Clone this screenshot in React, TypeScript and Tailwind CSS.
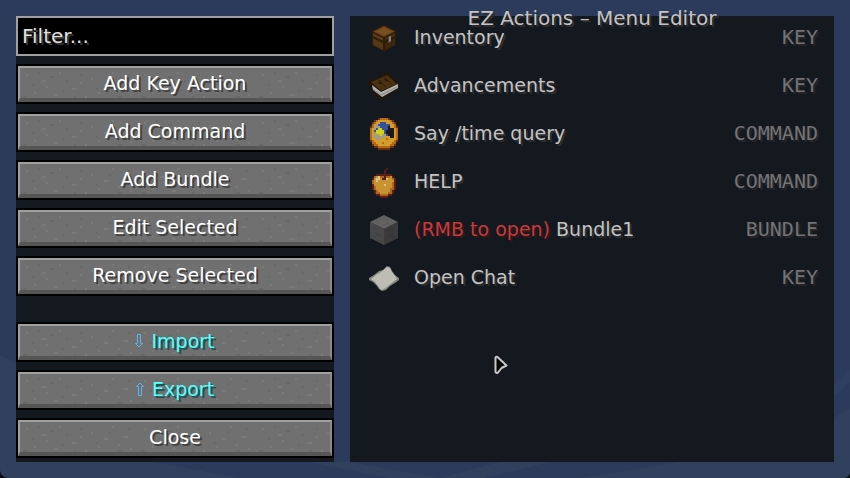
import clsx from "clsx";
import type { ReactNode } from "react";

type Entry = {
  name: string;
  hint?: string;
  type: string;
  icon: ReactNode;
};

const shadowLight = "[text-shadow:2px_2px_0_#2f2f30]";

function Sprite({ rows, colors }: { rows: string[]; colors: Record<string, string> }) {
  return (
    <svg
      viewBox={`0 0 ${rows[0].length} ${rows.length}`}
      className="size-8 shrink-0"
      shapeRendering="crispEdges"
      aria-hidden="true"
    >
      {rows.map((row, y) =>
        row
          .split("")
          .map((c, x) =>
            colors[c] ? <rect key={`${x}-${y}`} x={x} y={y} width="1" height="1" fill={colors[c]} /> : null
          )
      )}
    </svg>
  );
}

function ChestIcon() {
  return (
    <svg viewBox="0 0 32 32" className="size-8 shrink-0" aria-hidden="true">
      <path d="M16 3 28 9v14l-12 7L4 23V9z" fill="#2a1c0d" />
      <path d="M16 4 27 9.500 16 15 5 9.500z" fill="#6b4415" />
      <path d="m16 6 8 3.500-8 3.500-8-3.500z" fill="#7b5020" />
      <path d="m5 11 10 5v3L5 14z" fill="#5c3c14" />
      <path d="m5 16 10 5v7L5 23z" fill="#553712" />
      <path d="m27 11-10 5v3l10-5z" fill="#432c10" />
      <path d="m27 16-10 5v7l10-5z" fill="#3c270e" />
      <path d="m20 15 3-1v5l-3 2z" fill="#848484" />
      <path d="m20 15 1-.5v6l-1 .5z" fill="#454545" />
    </svg>
  );
}

function BookIcon() {
  return (
    <svg viewBox="0 0 32 32" className="size-8 shrink-0" aria-hidden="true">
      <path d="M19 3h3l9 12v3l-4 2v2l-11 6-3 2-3-2-8-8v-4l-2-2v-2z" fill="#21150b" />
      <path d="m19 5 10 9-16 7L3 12z" fill="#4a3110" />
      <path d="m10 9 8 8m-3-11 8 8" stroke="#3a250c" strokeWidth="1.500" />
      <path d="m11 12 2 2m4-5 2 2" stroke="#1c1208" strokeWidth="1.500" />
      <path d="M4 15 13 22 30 14V18L14 27 5 20z" fill="#b3b3b3" />
      <path d="m5 19 8 6 16-8" fill="none" stroke="#83837f" />
    </svg>
  );
}

function ClockIcon() {
  return (
    <Sprite
      rows={[
        ".....roooor.....",
        "...royyyyyyor...",
        "..royybbbyyyor..",
        "..oygbbbbbbyyo..",
        ".royggbbbbkyyor.",
        ".oygbLLbbbkkkyo.",
        ".oybLLLLbkkkkyo.",
        ".oygLLLLbkkkkyo.",
        ".oygglLggbkkkyo.",
        ".oygggggyyykkyo.",
        ".oyyggyyyoyyyyo.",
        ".royyyyyyyyyyor.",
        "..ooyyyoyyyyoo..",
        "..rooyyyyyyoor..",
        "...rroooooorr...",
        ".....rrrrrr.....",
      ]}
      colors={{
        o: "#b56a18",
        y: "#d59b2b",
        g: "#9c9c91",
        b: "#36519a",
        k: "#19191e",
        l: "#b7b521",
        L: "#d5d115",
        r: "#6b3010",
      }}
    />
  );
}

function AppleIcon() {
  return (
    <Sprite
      rows={[
        "................",
        ".........r......",
        "........r.......",
        "........r.......",
        "....rrrrrrrr....",
        "...oywoorooyr...",
        "..rywwyrrwyyor..",
        "..oywyyyyyyyyr..",
        "..oyyyyyyyyyor..",
        "..ryyyyywyyyor..",
        "..royyyyyyyyor..",
        "..royyyyyyyoor..",
        "...royyyyyyor...",
        "...rooyyyyoor...",
        "....rroooorr....",
        "......rrrr......",
      ]}
      colors={{ r: "#5c1d18", o: "#ac681f", y: "#c99332", w: "#dfc287" }}
    />
  );
}

function StoneIcon() {
  return (
    <svg viewBox="0 0 32 32" className="size-8 shrink-0" aria-hidden="true">
      <path d="M16 1 30 8 16 15 2 8z" fill="#626262" />
      <path d="m2 8 14 7v16L2 24z" fill="#484848" />
      <path d="m30 8-14 7v16l14-7z" fill="#3b3b3b" />
      <path d="m8 8 4-2m3 5 5-2m-5-5 5 2" stroke="#5a5a5a" />
      <path d="m4 13 5 2m-2 4 6 3m-9-1 4 2m1 3 5 2" stroke="#404040" />
      <path d="m20 17 5-2m-6 8 6-3m-1 4 4-2" stroke="#343434" />
    </svg>
  );
}

function PaperIcon() {
  return (
    <svg viewBox="0 0 32 32" className="size-8 shrink-0" aria-hidden="true">
      <path d="m19 4 3 1 2 4 3 4 4 3v2l-4 3-5 3-4 4-4 1-3-2-2-3-4-4-4-2v-2l5-3 5-4 4-1z" fill="#85857f" />
      <path d="m19 5 3 1 2 4 3 4 2 3-4 3-5 4-4 3-3 1-3-4-3-4-4-3 5-4 5-3z" fill="#bdbdb4" />
    </svg>
  );
}

const entries: Entry[] = [
  { name: "Inventory", type: "KEY", icon: <ChestIcon /> },
  { name: "Advancements", type: "KEY", icon: <BookIcon /> },
  { name: "Say /time query", type: "COMMAND", icon: <ClockIcon /> },
  { name: "HELP", type: "COMMAND", icon: <AppleIcon /> },
  { name: "Bundle1", hint: "(RMB to open)", type: "BUNDLE", icon: <StoneIcon /> },
  { name: "Open Chat", type: "KEY", icon: <PaperIcon /> },
];

function StoneTexture() {
  return (
    <svg className="absolute inset-0 size-full" aria-hidden="true">
      <defs>
        <pattern id="stone" width="118" height="34" patternUnits="userSpaceOnUse">
          <path
            d="M6 7h2M22 13h4M39 5h2M52 21h4M71 11h2M84 17h4M14 25h2M34 27h4M65 29h2M92 5h2M104 15h4M110 27h2M26 19h2M60 15h2M78 25h2M98 23h2"
            stroke="#7a7a7a"
            strokeWidth="2"
          />
          <path
            d="M12 17h2M30 9h4M46 13h2M60 7h2M76 21h2M3 29h4M89 11h2M42 23h2M108 7h2M98 29h4M18 5h2M54 29h2"
            stroke="#686868"
            strokeWidth="2"
          />
        </pattern>
      </defs>
      <rect width="100%" height="100%" fill="url(#stone)" />
    </svg>
  );
}

function StoneButton({ children, accent }: { children: ReactNode; accent?: boolean }) {
  return (
    <button
      type="button"
      className="relative h-10 w-full border border-black bg-black p-px text-[19px] leading-6"
    >
      <span
        className={clsx(
          "relative flex size-full items-center justify-center border-t-2 border-r-2 border-b-4 border-l-2 border-t-[#a0a0a0] border-r-[#8c8c8c] border-b-[#565656] border-l-[#a0a0a0] bg-[#707070]",
          accent
            ? "text-[#55ffff] [text-shadow:2px_2px_0_#1d4f50]"
            : "text-white [text-shadow:2px_2px_0_#3f3f3f]"
        )}
      >
        <StoneTexture />
        <span className="relative flex items-center gap-2">{children}</span>
      </span>
    </button>
  );
}

function Arrow({ up }: { up?: boolean }) {
  return (
    <svg
      viewBox="0 0 8 14"
      className={clsx("h-3.5 w-2", up && "rotate-180")}
      fill="none"
      stroke="#5ab4ee"
      aria-hidden="true"
    >
      <path d="M2.500 9V.5h3V9m-5 .5h2M5.500 9.500h2m-7 0L4 13l3.500-3.500" />
    </svg>
  );
}

function Backdrop() {
  return (
    <svg
      className="absolute inset-0 size-full"
      viewBox="0 0 850 478"
      preserveAspectRatio="none"
      aria-hidden="true"
    >
      <path d="M0 355 16 364V412L0 400zM0 400l60 45 180 33H0z" fill="#31405d" />
      <path d="M310 462h40l90 16h-50zM550 462h-50l-60 16h45z" fill="#31405d" />
      <path d="M850 408 834 418V462H680L580 478H850z" fill="#31405d" />
      <path d="M850 370 834 384V396L850 382z" fill="#2f3f60" />
      <path d="M0 471q1 6 8 7H0zM850 473q-1 4-5 5h5z" fill="#0b0d10" />
    </svg>
  );
}

function Sidebar() {
  return (
    <div className="flex flex-col gap-2 bg-[#14181f] pb-1">
      <input
        type="text"
        aria-label="Filter"
        placeholder="Filter..."
        className="h-10 w-full border-2 border-[#a0a0a0] bg-black px-1 text-[20px] leading-6 text-[#e0e0e0] placeholder:text-[#e0e0e0] placeholder:opacity-100 [text-shadow:2px_2px_0_#383838]"
      />
      <StoneButton>Add Key Action</StoneButton>
      <StoneButton>Add Command</StoneButton>
      <StoneButton>Add Bundle</StoneButton>
      <StoneButton>Edit Selected</StoneButton>
      <StoneButton>Remove Selected</StoneButton>
      <div className="mt-auto flex flex-col gap-2">
        <StoneButton accent>
          <Arrow />
          Import
        </StoneButton>
        <StoneButton accent>
          <Arrow up />
          Export
        </StoneButton>
        <StoneButton>Close</StoneButton>
      </div>
    </div>
  );
}

export default function App() {
  return (
    <div className="relative min-h-screen overflow-hidden bg-[#2c3b5b] font-['DejaVu_Sans',sans-serif]">
      <Backdrop />
      <main className="relative grid min-h-screen grid-cols-[318fr_484fr] gap-4 p-4">
        <Sidebar />
        <section className="relative bg-[#14181f]">
          <h1
            className={clsx(
              "absolute inset-x-0 -top-2.5 text-center text-[20px] leading-6 whitespace-nowrap text-[#c4c4c4]",
              shadowLight
            )}
          >
            EZ Actions – Menu Editor
          </h1>
          <ul className="-mt-[3px] px-4">
            {entries.map((entry) => (
              <li key={entry.name} className="flex h-12 items-center text-[19px] leading-6">
                <span className="mt-0.5 flex w-12 shrink-0 pl-0.5">{entry.icon}</span>
                <span className={clsx("text-[#c4c4c4]", shadowLight)}>
                  {entry.hint && (
                    <span className="text-[#c63c3c] [text-shadow:2px_2px_0_#361717]">{entry.hint} </span>
                  )}
                  {entry.name}
                </span>
                <span className="ml-auto font-['DejaVu_Sans_Mono',monospace] text-[20px] text-[#747474] [text-shadow:2px_2px_0_#24262a]">
                  {entry.type}
                </span>
              </li>
            ))}
          </ul>
        </section>
      </main>
      <svg
        viewBox="0 0 16 20"
        className="pointer-events-none absolute top-[355px] left-[493px] h-5 w-4"
        aria-hidden="true"
      >
        <path
          d="M2.500 2.500q1-1.500 2.500 0L13.500 10.500 8.500 13 5 17.500q-2 1-2.500-.5z"
          fill="#000"
          stroke="#c9c9c9"
          strokeWidth="2"
          strokeLinejoin="round"
        />
      </svg>
    </div>
  );
}
